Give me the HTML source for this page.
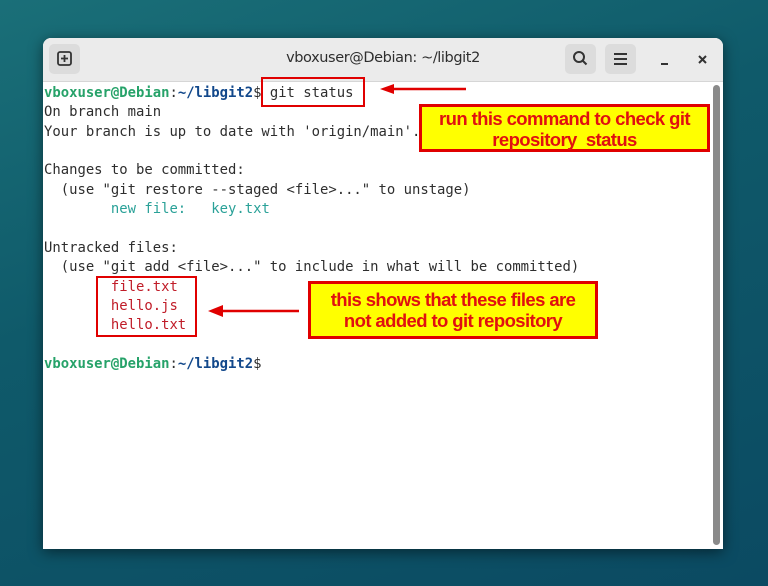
<!DOCTYPE html>
<html><head><style>
body{margin:0;width:768px;height:586px;overflow:hidden;background:linear-gradient(160deg,#1a6f78 0%,#0f5a6a 40%,#0b4a62 100%);position:relative;font-family:"Liberation Sans",sans-serif}
.win{position:absolute;left:43px;top:38px;width:680px;height:511px;background:#fff;border-radius:8px 8px 0 0;box-shadow:0 3px 14px rgba(0,0,0,.5);overflow:hidden}
.tb{height:43px;background:#ebebeb;border-bottom:1px solid #d6d6d6;position:relative}
.btn{position:absolute;top:6px;width:31px;height:30px;background:#dcdcdc;border-radius:5px}
.title{position:absolute;left:0;right:0;top:12px;text-align:center;font-size:14.5px;color:#2e2e2e;font-family:"DejaVu Sans",sans-serif;letter-spacing:-0.4px}
.term{position:absolute;left:1px;top:46px;font-family:"DejaVu Sans Mono","Liberation Mono",monospace;font-size:13.9px;line-height:19.36px;color:#2e2e2e;white-space:pre}
.g{color:#26a269;font-weight:bold}.b{color:#12488b;font-weight:bold}.t{color:#2aa198}.r{color:#c01c28}
.sb{position:absolute;right:3px;top:47px;width:7px;height:460px;background:#8a8a8a;border-radius:4px}
.rb{position:absolute;border:2px solid #e00000}
.y{position:absolute;background:#ffff00;border:3px solid #e00000;color:#e01010;font-weight:bold;font-size:18.5px;text-align:center;line-height:21px;box-sizing:border-box;letter-spacing:-0.6px}
</style></head><body>
<div class="win">
<div class="tb">
<div class="btn" style="left:6px"><svg width="31" height="30"><rect x="9" y="8" width="13" height="13" rx="2" fill="none" stroke="#333" stroke-width="1.8"/><path d="M15.5 11v7M12 14.5h7" stroke="#333" stroke-width="1.8"/></svg></div>
<div class="title">vboxuser@Debian: ~/libgit2</div>
<div class="btn" style="left:522px"><svg width="31" height="30"><circle cx="14" cy="13" r="5" fill="none" stroke="#333" stroke-width="2"/><path d="M17.5 16.5l4 4" stroke="#333" stroke-width="2"/></svg></div>
<div class="btn" style="left:562px"><svg width="31" height="30"><path d="M9 10h13M9 15h13M9 20h13" stroke="#333" stroke-width="2"/></svg></div>
<svg style="position:absolute;left:614px;top:12px" width="60" height="20"><path d="M4 14h7" stroke="#333" stroke-width="2"/><path d="M42 6l7 7M49 6l-7 7" stroke="#333" stroke-width="2"/></svg>
</div>
<div class="term"><span class="g">vboxuser@Debian</span>:<span class="b">~/libgit2</span>$ git status
On branch main
Your branch is up to date with 'origin/main'.

Changes to be committed:
  (use "git restore --staged &lt;file&gt;..." to unstage)
	<span class="t">new file:   key.txt</span>

Untracked files:
  (use "git add &lt;file&gt;..." to include in what will be committed)
	<span class="r">file.txt</span>
	<span class="r">hello.js</span>
	<span class="r">hello.txt</span>

<span class="g">vboxuser@Debian</span>:<span class="b">~/libgit2</span>$ </div>
<div class="sb"></div>
</div>
<div class="rb" style="left:261px;top:77px;width:100px;height:26px"></div>
<div class="rb" style="left:96px;top:276px;width:97px;height:57px"></div>
<svg style="position:absolute;left:0;top:0" width="768" height="586"><path d="M466 89H392" stroke="#e00000" stroke-width="2.5"/><path d="M380 89l14-5v10z" fill="#e00000"/><path d="M299 311H222" stroke="#e00000" stroke-width="2.5"/><path d="M208 311l15-6v12z" fill="#e00000"/></svg>
<div class="y" style="left:419px;top:104px;width:291px;height:48px;padding-top:1px">run this command to check git<br>repository&nbsp; status</div>
<div class="y" style="left:308px;top:281px;width:290px;height:58px;padding-top:5px">this shows that these files are<br>not added to git repository</div>
</body></html>
